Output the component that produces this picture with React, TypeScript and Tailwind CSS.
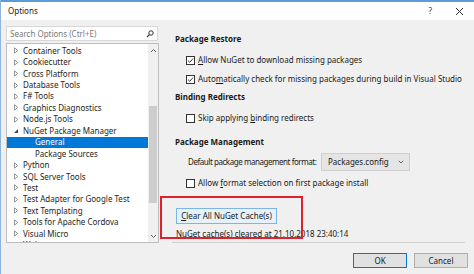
const treeItems: { label: string; level: 0 | 1; expanded?: boolean; selected?: boolean }[] = [
  { label: "Container Tools", level: 0 },
  { label: "Cookiecutter", level: 0 },
  { label: "Cross Platform", level: 0 },
  { label: "Database Tools", level: 0 },
  { label: "F# Tools", level: 0 },
  { label: "Graphics Diagnostics", level: 0 },
  { label: "Node.js Tools", level: 0 },
  { label: "NuGet Package Manager", level: 0, expanded: true },
  { label: "General", level: 1, selected: true },
  { label: "Package Sources", level: 1 },
  { label: "Python", level: 0 },
  { label: "SQL Server Tools", level: 0 },
  { label: "Test", level: 0 },
  { label: "Test Adapter for Google Test", level: 0 },
  { label: "Text Templating", level: 0 },
  { label: "Tools for Apache Cordova", level: 0 },
  { label: "Visual Micro", level: 0 },
  { label: "Web", level: 0 },
];

function Arrow({ expanded }: { expanded?: boolean }) {
  if (expanded) {
    return (
      <svg width="6" height="6" viewBox="0 0 6 6" className="shrink-0">
        <path d="M5 1 L5 5 L1 5 Z" fill="#444" />
      </svg>
    );
  }
  return (
    <svg width="6" height="7" viewBox="0 0 6 7" className="shrink-0">
      <path d="M1.5 0.8 L4.8 3.5 L1.5 6.2 Z" fill="none" stroke="#8a8a8a" strokeWidth="0.9" />
    </svg>
  );
}

function Checkbox({ checked }: { checked?: boolean }) {
  return (
    <span className="w-[9px] h-[9px] border border-[#333] bg-white flex items-center justify-center shrink-0">
      {checked && (
        <svg width="7" height="7" viewBox="0 0 7 7">
          <path d="M1 3.6 L2.8 5.3 L6 1.5" fill="none" stroke="#222" strokeWidth="0.9" />
        </svg>
      )}
    </span>
  );
}

function CheckRow({ checked, children, className }: { checked?: boolean; children: React.ReactNode; className: string }) {
  return (
    <div className={`flex items-center h-[12px] pl-[26px] gap-[3px] whitespace-nowrap ${className}`}>
      <Checkbox checked={checked} />
      <span>{children}</span>
    </div>
  );
}

function TreeRow({ item }: { item: (typeof treeItems)[number] }) {
  return (
    <div
      className={`flex items-center h-[11.44px] whitespace-nowrap ${
        item.selected ? "bg-[#0078d7] text-white" : "text-[#1e1e1e]"
      }`}
    >
      {item.level === 0 ? (
        <>
          <span className="w-[16px] flex justify-center pl-[2px]">
            <Arrow expanded={item.expanded} />
          </span>
          <span>{item.label}</span>
        </>
      ) : (
        <span className="pl-[28px]">{item.label}</span>
      )}
    </div>
  );
}

export default function App() {
  return (
    <div
      className="w-[474px] h-[274px] bg-[#f0f0f0] relative overflow-hidden text-[8px] leading-none text-[#1a1a1a] border-l border-[#8fb4dc]"
      style={{ fontFamily: '"Noto Sans", "Open Sans", sans-serif' }}
    >
      <div className="h-[2px] bg-[#5b9bd8]" />
      <div className="h-[18px] bg-white flex items-center pl-[7px] pr-[10px] text-[8px]">
        <span className="flex-1">Options</span>
        <span className="text-[#333] mr-[23px]">?</span>
        <svg width="9" height="9" viewBox="0 0 9 9">
          <path d="M1 1 L8 8 M8 1 L1 8" stroke="#333" strokeWidth="1" />
        </svg>
      </div>

      <div className="flex">
        {/* left navigation */}
        <div className="w-[159px] pl-[5px] pt-[6px] shrink-0">
          <div className="h-[15px] w-[152px] bg-white border border-[#d8d8d8] flex items-center pl-[3px] pr-[3px] text-[#7a7a7a]">
            <span className="flex-1">Search Options (Ctrl+E)</span>
            <svg width="8" height="8" viewBox="0 0 8 8">
              <circle cx="5" cy="3" r="2.2" fill="none" stroke="#333" strokeWidth="1" />
              <path d="M3.4 4.6 L1 7" stroke="#333" strokeWidth="1.2" />
            </svg>
          </div>
          <div className="mt-[2px] h-[200px] w-[153px] bg-white border border-[#bdbdbd] flex overflow-hidden">
            <div className="flex-1 pt-[1px] overflow-hidden">
              {treeItems.map((item) => (
                <TreeRow key={item.label} item={item} />
              ))}
            </div>
            <div className="w-[10px] bg-[#f0f0f0] flex flex-col items-center">
              <svg width="7" height="5" viewBox="0 0 7 5" className="mt-[4px]">
                <path d="M1 4 L3.5 1.5 L6 4" fill="none" stroke="#606060" strokeWidth="1" />
              </svg>
              <div className="w-[8px] h-[97px] bg-[#cdcdcd] mt-[53px]" />
              <svg width="7" height="5" viewBox="0 0 7 5" className="mt-[31px]">
                <path d="M1 1 L3.5 3.5 L6 1" fill="none" stroke="#606060" strokeWidth="1" />
              </svg>
            </div>
          </div>
        </div>

        {/* right page */}
        <div className="flex-1 flex flex-col relative">
          <div className="h-[12px] mt-[13px] pl-[15px] flex items-center font-bold">Package Restore</div>
          <CheckRow checked className="mt-[9px]">
            <span className="underline">A</span>llow NuGet to download missing packages
          </CheckRow>
          <CheckRow checked className="mt-[7px]">
            Auto<span className="underline">m</span>atically check for missing packages during build in Visual Studio
          </CheckRow>
          <div className="h-[12px] mt-[6px] pl-[15px] flex items-center font-bold">Binding Redirects</div>
          <CheckRow className="mt-[9px]">
            Skip applying <span className="underline">b</span>inding redirects
          </CheckRow>
          <div className="h-[12px] mt-[12px] pl-[15px] flex items-center font-bold">Package Management</div>
          <div className="h-[18px] mt-[5px] pl-[28px] flex items-center whitespace-nowrap">
            <span className="w-[133px] shrink-0 tracking-[-0.45px]">Default package management format:</span>
            <div className="w-[89px] h-[18px] bg-[#e5e5e5] border border-[#cfcfcf] flex items-center pl-[6px] pr-[5px]">
              <span className="flex-1">Packages.config</span>
              <svg width="6" height="4" viewBox="0 0 6 4">
                <path d="M0.8 0.8 L3 3 L5.2 0.8" fill="none" stroke="#555" strokeWidth="0.9" />
              </svg>
            </div>
          </div>
          <CheckRow className="mt-[6px]">
            Allow <span className="underline">f</span>ormat selection on first package install
          </CheckRow>
          <div className="mt-[19px] pl-[16px] flex">
            <div className="w-[101px] h-[16px] bg-[#e5f1fb] border border-[#7eb4ea] flex items-center justify-center whitespace-nowrap">
              <span>
                <span className="underline">C</span>lear All NuGet Cache(s)
              </span>
            </div>
          </div>
          <div className="h-[12px] mt-[4px] pl-[16px] flex items-center whitespace-nowrap">
            NuGet cache(s) cleared at 21.10.2018 23:40:14
          </div>
          <div className="ml-[12px] w-[293px] h-px bg-[#d0d0d0] mt-[2px]" />
          <div className="flex justify-end gap-[7px] mt-[10px] pr-[6px]">
            <div className="w-[54px] h-[15px] bg-[#e1e1e1] border border-[#0078d7] flex items-center justify-center">OK</div>
            <div className="w-[54px] h-[15px] bg-[#e1e1e1] border border-[#adadad] flex items-center justify-center">Cancel</div>
          </div>

          {/* annotation box */}
          <div className="absolute left-0 top-[176px] w-[143px] h-[43px] border-2 border-[#e0202a] pointer-events-none" />
        </div>
      </div>
    </div>
  );
}
